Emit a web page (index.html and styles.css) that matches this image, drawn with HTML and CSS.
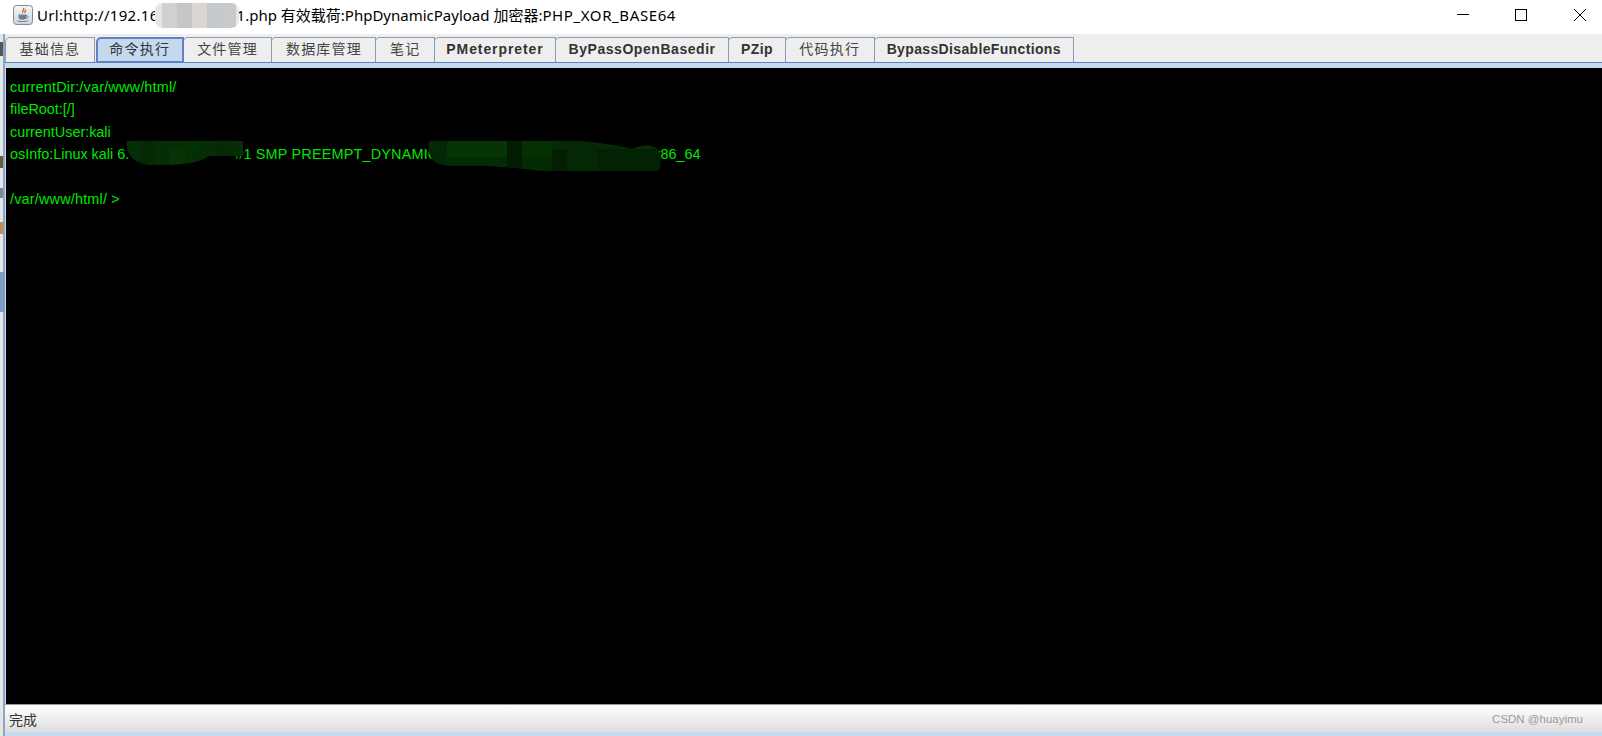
FILE: index.html
```html
<!DOCTYPE html>
<html lang="zh">
<head>
    <meta charset="UTF-8">
    <title>Shell</title>
    <link rel="stylesheet" href="styles.css">
</head>
<body>
    <div class="titlebar">
        <svg class="app-icon" viewBox="0 0 20 20">
            <defs>
                <linearGradient id="iconbg" x1="0" y1="0" x2="0" y2="1">
                    <stop offset="0" stop-color="#f6f6f6"/>
                    <stop offset="1" stop-color="#cfd3d8"/>
                </linearGradient>
            </defs>
            <rect x="0.500" y="0.500" width="19" height="19" rx="3" fill="url(#iconbg)" stroke="#7d8b9b"/>
            <path d="M10.500 3c1.500 1.800-2.200 2.800-.7 5M12.500 4.500c.8 1-1.500 2-.5 3.500" fill="none" stroke="#c8622a" stroke-width="1.300"/>
            <path d="M5.500 9.500h8v2.500c0 1.800-1.500 2.700-4 2.700s-4-.9-4-2.700z" fill="#6b8098"/>
            <path d="M13.500 10.500c2 0 2 2.500-.5 2.800" fill="none" stroke="#6b8098"/>
            <path d="M4.500 15.800c2.500 1 8 1 10.500 0" fill="none" stroke="#6b8098"/>
        </svg>
        <span class="title-text"><span class="url">Url:http://192.16</span><span class="title-gap"></span>1.php 有效载荷:PhpDynamicPayload 加密器:<span class="wide">PHP_XOR_BASE64</span></span>
        <div class="title-smudge"></div>
        <div class="win-buttons">
            <svg viewBox="0 0 12 12"><path d="M0 5.500h12" stroke="#000" stroke-width="1"/></svg>
            <svg viewBox="0 0 12 12"><rect x="0.500" y="0.500" width="11" height="11" fill="none" stroke="#000"/></svg>
            <svg viewBox="0 0 12 12"><path d="M0 0l12 12M12 0L0 12" stroke="#000" stroke-width="1"/></svg>
        </div>
    </div>

    <div class="tabstrip">
        <div class="tab first">基础信息</div>
        <div class="tab active">命令执行</div>
        <div class="tab">文件管理</div>
        <div class="tab">数据库管理</div>
        <div class="tab">笔记</div>
        <div class="tab latin meter">PMeterpreter</div>
        <div class="tab latin basedir">ByPassOpenBasedir</div>
        <div class="tab latin">PZip</div>
        <div class="tab">代码执行</div>
        <div class="tab latin">BypassDisableFunctions</div>
    </div>

    <div class="console">
        <div class="line spaced">currentDir:/var/www/html/</div>
        <div class="line">fileRoot:[/]</div>
        <div class="line">currentUser:kali</div>
        <div class="line">osInfo:Linux kali 6.<span class="gap-a"></span><span class="spaced">#1 SMP PREEMPT_DYNAMIC</span><span class="gap-b"></span>11 6 : x86_64</div>
        <div class="line">&nbsp;</div>
        <div class="line spaced">/var/www/html/ &gt;</div>

        <!-- mosaic over the hidden parts of the kernel string -->
        <svg class="smear smear-a" viewBox="0 0 118 24">
            <defs>
                <clipPath id="clip-a"><path d="M2 0H118V15H84C74 22 60 24 30 24C10 24 0 14 2 0Z"/></clipPath>
            </defs>
            <g clip-path="url(#clip-a)">
                <rect width="118" height="24" fill="#052e05"/>
                <rect x="15" width="15" height="24" fill="#052805"/>
                <rect x="45" y="8" width="15" height="16" fill="#053405"/>
                <rect x="60" width="15" height="12" fill="#043104"/>
                <rect x="90" width="15" height="16" fill="#052a05"/>
            </g>
        </svg>
        <svg class="smear smear-b" viewBox="0 0 234 30">
            <defs>
                <clipPath id="clip-b"><path d="M2 0H150C170 1 190 4 205 8C215 3 228 3 232 10C234 20 234 30 230 30H120C90 28 70 24 30 25C8 25 0 20 2 0Z"/></clipPath>
            </defs>
            <g clip-path="url(#clip-b)">
                <rect width="234" height="30" fill="#042c04"/>
                <rect x="0" width="20" height="24" fill="#052804"/>
                <rect x="20" width="60" height="16" fill="#053505"/>
                <rect x="80" width="15" height="30" fill="#041c04"/>
                <rect x="95" width="30" height="16" fill="#043004"/>
                <rect x="125" y="8" width="15" height="22" fill="#031e03"/>
                <rect x="140" width="30" height="30" fill="#042804"/>
                <rect x="170" y="8" width="64" height="22" fill="#032203"/>
            </g>
        </svg>
    </div>

    <div class="statusbar">
        <span>完成</span>
        <span class="watermark">CSDN @huayimu</span>
    </div>

    <!-- edge of the window behind this one -->
    <div class="behind">
        <i class="mark mark-1"></i>
        <i class="mark mark-2"></i>
        <i class="mark mark-3"></i>
        <i class="mark mark-4"></i>
        <i class="mark mark-5"></i>
    </div>
</body>
</html>
```

FILE: styles.css
```css
html, body {
    margin: 0;
    height: 100%;
}
body {
    width: 1602px;
    height: 736px;
    overflow: hidden;
    display: flex;
    flex-direction: column;
    background-color: #c6daef;
    position: relative;
    font-family: "Liberation Sans", "Noto Sans CJK SC", sans-serif;
}
.titlebar {
    height: 34px;
    flex: none;
    background-color: #fff;
    display: flex;
    align-items: center;
    padding: 0 16px 5px 13px;
    box-sizing: border-box;
    position: relative;
}
.app-icon {
    width: 20px;
    height: 20px;
    margin-right: 4px;
}
.title-text {
    font-family: "Noto Sans", "Noto Sans CJK SC", sans-serif;
    font-size: 15px;
    color: #000;
    white-space: nowrap;
}
.url {
    letter-spacing: 0.300px;
}
.wide {
    letter-spacing: 0.600px;
}
.title-gap {
    display: inline-block;
    width: 78px;
}
.title-smudge {
    position: absolute;
    left: 155px;
    top: 3px;
    width: 84px;
    height: 25px;
    border-radius: 8px;
    background: linear-gradient(90deg, #e6e6e6 0 8%, #d2d0ce 8% 26%, #c6c6c6 26% 44%, #dad7d3 44% 62%, #c4c9cd 62% 80%, #cacaca 80% 96%, #e6e6e6 96%);
}
.win-buttons {
    margin-left: auto;
    display: flex;
    gap: 46px;
}
.win-buttons svg {
    width: 12px;
    height: 12px;
    display: block;
}
.win-buttons svg:last-child {
    margin-left: 1px;
}
.tabstrip {
    height: 29px;
    flex: none;
    box-sizing: border-box;
    margin-left: 5px;
    padding-top: 3px;
    background-color: #eeeeee;
    border-bottom: 1px solid #6382bf;
    display: flex;
}
.tab {
    box-sizing: border-box;
    height: 25px;
    padding: 0 13.500px;
    margin-left: -1px;
    border: 1px solid #8a9cb5;
    border-bottom: none;
    border-top-left-radius: 5px;
    background-color: #eeeeee;
    color: #444;
    font-size: 14px;
    letter-spacing: 1.200px;
    line-height: 23px;
    white-space: nowrap;
}
.tab.first {
    margin-left: 0;
}
.tab.active {
    margin-left: 1px;
    padding: 0 11.500px;
    background-color: #c4d9f0;
    border: 2px solid #6382bf;
    border-bottom: 1px solid #6382bf;
    line-height: 21px;
    color: #333;
    position: relative;
}
.tab.latin {
    padding: 0 12px;
    font-weight: bold;
    color: #333;
    letter-spacing: 0.350px;
}
.tab.meter {
    padding: 0 11.500px;
    letter-spacing: 0.900px;
}
.tab.basedir {
    padding: 0 12.500px;
    letter-spacing: 0.550px;
}
.console {
    flex: 1;
    margin: 5px 0 0 6px;
    padding: 7.500px 0 0 4px;
    background-color: #000;
    color: #00e800;
    font-size: 14.400px;
    position: relative;
}
.line {
    height: 22.500px;
    line-height: 22.500px;
    white-space: nowrap;
}
.spaced {
    letter-spacing: 0.200px;
}
.gap-a {
    display: inline-block;
    width: 106px;
}
.gap-b {
    display: inline-block;
    width: 176px;
}
.smear {
    position: absolute;
    display: block;
}
.smear-a {
    left: 119px;
    top: 73px;
    width: 118px;
    height: 24px;
}
.smear-b {
    left: 421px;
    top: 73px;
    width: 234px;
    height: 30px;
}
.statusbar {
    height: 28px;
    flex: none;
    margin: 0 0 4px 5px;
    box-sizing: border-box;
    border-top: 1px solid #8f9aa6;
    padding: 0 19px 0 4px;
    background: linear-gradient(#ffffff, #dedede);
    display: flex;
    align-items: center;
    justify-content: space-between;
    font-size: 14px;
    color: #333;
}
.watermark {
    font-size: 11.500px;
    color: #9a9a9a;
}
.behind {
    position: absolute;
    left: 0;
    top: 34px;
    width: 5px;
    height: 702px;
    background: linear-gradient(90deg, #e6e6e6 0 3px, #8ea6c6 3px 5px);
}
.mark {
    position: absolute;
    left: 0;
    width: 3px;
}
.mark-1 {
    top: 8px;
    height: 14px;
    background-color: #555;
}
.mark-2 {
    top: 122px;
    height: 12px;
    background-color: #6a5a40;
}
.mark-3 {
    top: 154px;
    height: 10px;
    background-color: #7a8a9a;
}
.mark-4 {
    top: 188px;
    height: 12px;
    background-color: #c98a50;
}
.mark-5 {
    top: 238px;
    height: 40px;
    width: 5px;
    background-color: #7f9cc0;
}
```
